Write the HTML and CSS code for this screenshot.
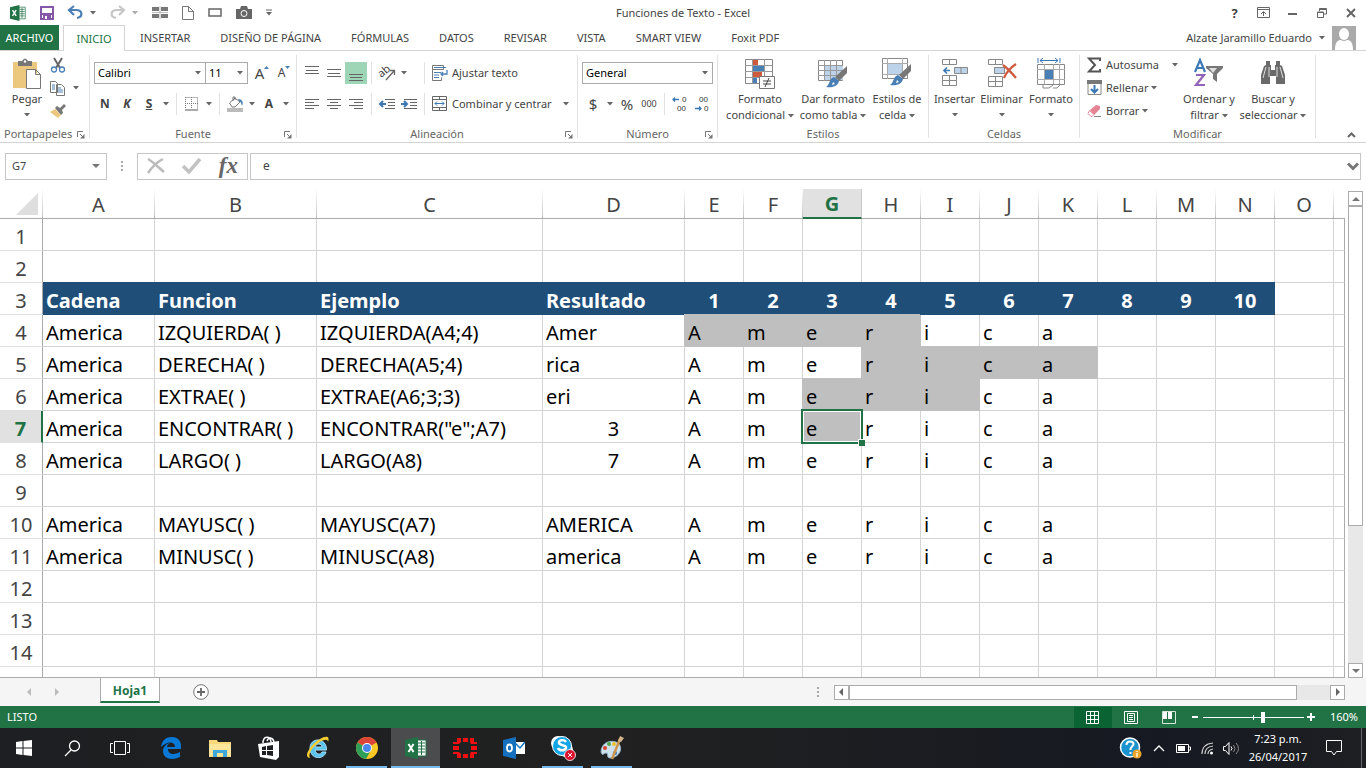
FILE: index.html
```html
<!DOCTYPE html>
<html lang="es">
<head>
<meta charset="utf-8">
<title>Funciones de Texto - Excel</title>
<link rel="stylesheet" href="styles.css">
</head>
<body>
<svg class="defs" aria-hidden="true">
  <symbol id="caret" viewBox="0 0 6 4"><path d="M0 0h6L3 3.5z" fill="#666"/></symbol>
  <symbol id="launch" viewBox="0 0 8 8"><path d="M.5 6V.5H6M3 3l3 3" fill="none" stroke="#777"/><path d="M7.500 3v4.500H3z" fill="#777"/></symbol>
  <symbol id="excel" viewBox="0 0 22 22"><path d="M12 3h9v16h-9z" fill="#fff" stroke="#217346"/><path d="M13 6h7M13 9h7M13 12h7M13 15h7M16.500 4v14" stroke="#217346"/><path d="M0 3l13-3v22L0 19z" fill="#217346"/><path d="M3.500 7l5 8M8.500 7l-5 8" stroke="#fff" stroke-width="2"/></symbol>
  <symbol id="brush" viewBox="0 0 24 22"><path d="M23 0v7l-8 8-4-4z" fill="#777"/><path d="M10 11l5 4c-1 5-6 7-13 6 4-2 3-9 8-10z" fill="#4a7fb5"/><path d="M9 16l2 2-3 1z" fill="#fff"/></symbol>
</svg>

<header class="titlebar">
  <div class="quick">
    <svg class="app" width="16" height="16"><use href="#excel"/></svg>
    <button aria-label="Guardar"><svg width="14" height="14" viewBox="0 0 14 14"><path d="M1 1h12v12H1z" fill="#fff" stroke="#8657a8" stroke-width="2"/><path d="M1 7h12v2H1zM3 9h8v5H3z" fill="#8657a8"/><path d="M5 10h2v3H5z" fill="#fff"/></svg></button>
    <button class="undo" aria-label="Deshacer"><svg width="15" height="13" viewBox="0 0 15 13"><path d="M6 0L1 4l5 5M1 4h7c7 0 7 7 1 8" fill="none" stroke="#4a7fb5" stroke-width="2.200"/></svg><svg class="caret"><use href="#caret"/></svg></button>
    <button class="undo faded" aria-label="Rehacer"><svg width="15" height="13" viewBox="0 0 15 13"><path d="M9 0l5 4-5 5M14 4H7C0 4 0 11 6 12" fill="none" stroke="#999" stroke-width="2.200"/></svg><svg class="caret"><use href="#caret"/></svg></button>
    <button aria-label="Dividir"><svg width="16" height="13" viewBox="0 0 16 13"><path d="M0 1h7v4H0zM9 1h7v4H9zM0 8h7v4H0zM9 8h7v4H9z" fill="#777"/><path d="M0 6.500h16M8 0v13" stroke="#bbb"/></svg></button>
    <button aria-label="Nuevo"><svg width="12" height="14" viewBox="0 0 12 14"><path d="M.5.5h6l5 5v8H.5zM6.500.5v5h5" fill="#fff" stroke="#777"/></svg></button>
    <button aria-label="Rectángulo"><svg width="14" height="9" viewBox="0 0 14 9"><path d="M1 1h12v7H1z" fill="#fff" stroke="#666" stroke-width="1.500"/></svg></button>
    <button aria-label="Cámara"><svg width="16" height="13" viewBox="0 0 16 13"><path d="M0 3h4l1-3h6l1 3h4v10H0z" fill="#666"/><circle cx="8" cy="7.500" r="3" fill="none" stroke="#fff"/></svg></button>
    <button class="more" aria-label="Personalizar"><svg width="6" height="7" viewBox="0 0 6 7"><path d="M0 1h6" stroke="#666"/><path d="M0 3h6L3 6.500z" fill="#666"/></svg></button>
  </div>
  <h1>Funciones de Texto - Excel</h1>
  <div class="window">
    <button aria-label="Ayuda"><b>?</b></button>
    <button aria-label="Cinta"><svg width="13" height="11" viewBox="0 0 13 11"><path d="M.5.500h12v10H.5zM.5 2.500h12M6.500 9V5M4 7l2.500-2.500L9 7" fill="none" stroke="#666"/></svg></button>
    <button aria-label="Minimizar"><svg width="10" height="11" viewBox="0 0 10 11"><path d="M0 7h9" stroke="#666" stroke-width="2"/></svg></button>
    <button aria-label="Restaurar"><svg width="10" height="10" viewBox="0 0 10 10"><path d="M.5 4h6v5.500h-6zM.5 4.500h6M2.500 3V.5h7V6H7M2.500 1.500h7" fill="none" stroke="#666"/></svg></button>
    <button aria-label="Cerrar"><svg width="10" height="10" viewBox="0 0 10 10"><path d="M1 1l8 8M9 1L1 9" stroke="#666" stroke-width="2"/></svg></button>
  </div>
</header>

<nav class="tabs">
  <button class="file">ARCHIVO</button>
  <button class="active">INICIO</button>
  <button>INSERTAR</button>
  <button>DISEÑO DE PÁGINA</button>
  <button>FÓRMULAS</button>
  <button>DATOS</button>
  <button>REVISAR</button>
  <button>VISTA</button>
  <button>SMART VIEW</button>
  <button>Foxit PDF</button>
  <button class="user">Alzate Jaramillo Eduardo <svg class="caret"><use href="#caret"/></svg>
    <svg width="24" height="24" viewBox="0 0 24 24"><path d="M0 0h24v24H0z" fill="#aaa"/><ellipse cx="12" cy="8" rx="5" ry="6" fill="#fff"/><path d="M3 24c0-8 3-10 6-10q3 2 6 0c3 0 6 2 6 10z" fill="#fff"/></svg></button>
</nav>

<section class="ribbon">
  <div class="group clipboard">
    <div class="body">
      <button class="big"><svg width="30" height="32" viewBox="0 0 30 32"><path d="M1 4h24v26H1z" fill="#ecc77e"/><path d="M6 3h4q3-5 6 0h4v5H6z" fill="#777"/><circle cx="13" cy="3.500" r="1.200" fill="#fff"/><path d="M14.500 11.500h9l5 5v14h-14zM23.500 11.500v5h5" fill="#fff" stroke="#777"/></svg><span>Pegar</span><svg class="caret"><use href="#caret"/></svg></button>
      <div class="stack">
        <button aria-label="Cortar"><svg width="16" height="16" viewBox="0 0 16 16"><path d="M4 1l6 10M12 1L6 11" stroke="#666" stroke-width="2"/><circle cx="4" cy="12.500" r="2.500" fill="none" stroke="#4a7fb5" stroke-width="1.300"/><circle cx="12" cy="12.500" r="2.500" fill="none" stroke="#4a7fb5" stroke-width="1.300"/></svg></button>
        <button aria-label="Copiar"><svg width="16" height="15" viewBox="0 0 16 15"><path d="M.5.500h5l2 2v9h-7zM6.500 3.500h5l3 3v8h-8z" fill="#fff" stroke="#777"/><path d="M2 4h3M2 6h3M2 8h3M8 7h3M8 9h5M8 11h5" stroke="#4a7fb5"/></svg><svg class="caret"><use href="#caret"/></svg></button>
        <button aria-label="Copiar formato"><svg width="16" height="15" viewBox="0 0 16 15"><path d="M0 8l5-3 6 6-3 3z" fill="#ecc77e"/><path d="M5 4l2-2 3 2 4-4 2 2-4 4 1 3-2 2z" fill="#777"/></svg></button>
      </div>
    </div>
    <footer>Portapapeles<svg class="launch"><use href="#launch"/></svg></footer>
  </div>

  <div class="group font">
    <div class="body rows">
      <div class="row">
        <label class="pick family"><select aria-label="Fuente"><option>Calibri</option></select><svg class="caret"><use href="#caret"/></svg></label>
        <label class="pick size"><select aria-label="Tamaño"><option>11</option></select><svg class="caret"><use href="#caret"/></svg></label>
        <button class="ib grow" aria-label="Aumentar tamaño">A<svg width="5" height="3" viewBox="0 0 5 3"><path d="M0 3h5L2.500 0z" fill="#4a7fb5"/></svg></button>
        <button class="ib grow small" aria-label="Disminuir tamaño">A<svg width="5" height="3" viewBox="0 0 5 3"><path d="M0 0h5L2.500 3z" fill="#4a7fb5"/></svg></button>
      </div>
      <div class="row">
        <button class="ib"><b>N</b></button><button class="ib"><b><i>K</i></b></button><button class="ib"><b><u>S</u></b></button><button class="dd" aria-label="Subrayado"><svg class="caret"><use href="#caret"/></svg></button>
        <i class="sep"></i>
        <button class="ib" aria-label="Bordes"><svg width="14" height="14" viewBox="0 0 14 14"><path d="M.5.500h12v12M.5 0v12M6.500 0v12M0 6.500h13" fill="none" stroke="#777" stroke-dasharray="1 1"/><path d="M0 13h13" stroke="#555"/></svg></button><button class="dd" aria-label="Más bordes"><svg class="caret"><use href="#caret"/></svg></button>
        <i class="sep"></i>
        <button class="ib" aria-label="Relleno"><svg width="17" height="16" viewBox="0 0 17 16"><path d="M0 12h16v4H0z" fill="#bbb"/><path d="M2.500 7L8 2l5 4-5 5H5zM6 5V1h2v3" fill="#fff" stroke="#777"/><path d="M11 3c4 0 6 3 4 7-1-3-1-4-3-5z" fill="#4a7fb5"/></svg></button><button class="dd" aria-label="Más rellenos"><svg class="caret"><use href="#caret"/></svg></button>
        <button class="ib"><b>A</b></button><button class="dd" aria-label="Color de fuente"><svg class="caret"><use href="#caret"/></svg></button>
      </div>
    </div>
    <footer>Fuente<svg class="launch"><use href="#launch"/></svg></footer>
  </div>

  <div class="group align">
    <div class="body rows">
      <div class="row">
        <button class="ib" aria-label="Arriba"><svg width="14" height="14" viewBox="0 0 14 14"><path d="M0 .5h14M1 4.500h12M0 7.500h14" stroke="#666"/></svg></button>
        <button class="ib" aria-label="Medio"><svg width="14" height="14" viewBox="0 0 14 14"><path d="M0 3.500h14M1 7.500h12M0 10.500h14" stroke="#666"/></svg></button>
        <button class="ib on" aria-label="Abajo"><svg width="14" height="14" viewBox="0 0 14 14"><path d="M0 8.500h14M1 11.500h12M0 14.500h14" stroke="#666"/></svg></button>
        <i class="sep"></i>
        <div class="mid"><button class="ib" aria-label="Orientación"><svg width="18" height="18" viewBox="0 0 18 18"><text x="1" y="12" transform="rotate(-40 5 10)" font-size="11" fill="#444">ab</text><path d="M8 16l8-9M12 6.500h4.500V11" fill="none" stroke="#666" stroke-width="1.300"/></svg></button><button class="dd" aria-label="Más orientaciones"><svg class="caret"><use href="#caret"/></svg></button></div>
        <i class="sep"></i>
        <button class="tb"><svg width="16" height="16" viewBox="0 0 16 16"><path d="M.5.500h11v4H.5zM.5 4.500v11h9v-3" fill="none" stroke="#777"/><path d="M2 2.500h12M2 7.500h7M2 10h5M2 12.500h5" stroke="#4a7fb5"/><path d="M15 5v4H9M11 7L9 9l2 2" fill="none" stroke="#4a7fb5" stroke-width="1.300"/></svg>Ajustar texto</button>
      </div>
      <div class="row">
        <button class="ib" aria-label="Izquierda"><svg width="14" height="12" viewBox="0 0 14 12"><path d="M0 1.500h14M0 4.500h9M0 7.500h14M0 10.500h9" stroke="#666"/></svg></button>
        <button class="ib" aria-label="Centro"><svg width="14" height="12" viewBox="0 0 14 12"><path d="M0 1.500h14M3 4.500h8M0 7.500h14M3 10.500h8" stroke="#666"/></svg></button>
        <button class="ib" aria-label="Derecha"><svg width="14" height="12" viewBox="0 0 14 12"><path d="M0 1.500h14M5 4.500h9M0 7.500h14M5 10.500h9" stroke="#666"/></svg></button>
        <i class="sep"></i>
        <div class="mid"><button class="ib" aria-label="Disminuir sangría"><svg width="16" height="12" viewBox="0 0 16 12"><path d="M6 1.500h10M9 4.500h7M9 7.500h7M6 10.500h10" stroke="#666"/><path d="M1 6h6M4 3L1 6l3 3" fill="none" stroke="#3b78b5" stroke-width="2"/></svg></button><button class="ib" aria-label="Aumentar sangría"><svg width="16" height="12" viewBox="0 0 16 12"><path d="M3 1.500h13M9 4.500h7M9 7.500h7M3 10.500h13" stroke="#666"/><path d="M0 6h6M3 3l3 3-3 3" fill="none" stroke="#3b78b5" stroke-width="2"/></svg></button></div>
        <i class="sep"></i>
        <button class="tb"><svg width="16" height="16" viewBox="0 0 16 16"><path d="M.5.500h14v14H.5zM.5 3.500h14M.5 11.500h14M7.500 1v2M7.500 12v3" fill="none" stroke="#666"/><path d="M3 7.500h9M5 5.500l-2 2 2 2M10 5.500l2 2-2 2" fill="none" stroke="#3b78b5"/></svg>Combinar y centrar</button><button class="dd" aria-label="Más combinaciones"><svg class="caret"><use href="#caret"/></svg></button>
      </div>
    </div>
    <footer>Alineación<svg class="launch"><use href="#launch"/></svg></footer>
  </div>

  <div class="group number">
    <div class="body rows">
      <div class="row"><label class="pick format"><select aria-label="Formato de número"><option>General</option></select><svg class="caret"><use href="#caret"/></svg></label></div>
      <div class="row">
        <button class="ib sym">$</button><button class="dd" aria-label="Más monedas"><svg class="caret"><use href="#caret"/></svg></button><button class="ib sym">%</button><button class="ib tiny">000</button>
        <i class="sep"></i>
        <button class="ib dec" aria-label="Aumentar decimales"><svg width="16" height="18" viewBox="0 0 16 18"><path d="M1 4.500h6M3 2.500l-2 2 2 2" fill="none" stroke="#3b78b5" stroke-width="1.300"/><text x="10" y="7">0</text><text x="5" y="16">00</text></svg></button>
        <button class="ib dec" aria-label="Disminuir decimales"><svg width="16" height="18" viewBox="0 0 16 18"><path d="M1 13.500h6M5 11.500l2 2-2 2" fill="none" stroke="#3b78b5" stroke-width="1.300"/><text x="5" y="7">00</text><text x="10" y="16">0</text></svg></button>
      </div>
    </div>
    <footer>Número<svg class="launch"><use href="#launch"/></svg></footer>
  </div>

  <div class="group styles">
    <div class="body">
      <button class="big b72"><svg width="30" height="32" viewBox="0 0 30 32"><path d="M.5 1.500h27v24H.5z" fill="#fff" stroke="#888"/><path d="M8 2h5v5H8zM8 14h9v5H8z" fill="#cf5b3f"/><path d="M8 8h11v5H8zM8 20h4v5H8z" fill="#4a7fb5"/><path d="M.5 7.500h27M.5 13.500h27M.5 19.500h27M7.500 1v25M19.500 1v25" stroke="#999"/><path d="M14.500 18.500h15v12h-15z" fill="#fff" stroke="#777"/><path d="M18 23h8M18 26h8M24 20l-4 9" stroke="#444"/></svg><span>Formato<br>condicional <svg class="caret"><use href="#caret"/></svg></span></button>
      <button class="big b74"><svg width="30" height="32" viewBox="0 0 30 32"><path d="M.5 2.500h24v20H.5z" fill="#fff" stroke="#888"/><path d="M7 8h18v14H7z" fill="#bdd3ea"/><path d="M0 7.500h25M0 12.500h25M0 17.500h25M6.500 2v21M12.500 2v21M18.500 2v21" stroke="#999"/><use href="#brush" x="6" y="8" width="24" height="22"/></svg><span>Dar formato<br>como tabla <svg class="caret"><use href="#caret"/></svg></span></button>
      <button class="big b54"><svg width="30" height="32" viewBox="0 0 30 32"><path d="M.5.500h25v20H.5z" fill="#fff" stroke="#888"/><path d="M0 5.500h26M0 16.500h26M5.500 0v21M20.500 0v21" stroke="#aaa"/><path d="M6 6h14v10H6z" fill="#bdd3ea"/><use href="#brush" x="6" y="6" width="24" height="22"/></svg><span>Estilos de<br>celda <svg class="caret"><use href="#caret"/></svg></span></button>
    </div>
    <footer>Estilos</footer>
  </div>

  <div class="group cells">
    <div class="body">
      <button class="big b46"><svg width="28" height="32" viewBox="0 0 28 32"><path d="M1.500 1.500h14v5h-14zM8.500 1v5M1.500 17.500h14v10h-14zM1.500 22.500h14M8.500 17v10" fill="#fff" stroke="#888"/><path d="M13.500 9.500h13v6h-13zM20 9v6" fill="#bdd3ea" stroke="#888"/><path d="M3 12.500h6M6 9.500l-3 3 3 3" fill="none" stroke="#3b78b5" stroke-width="1.600"/></svg><span>Insertar</span><svg class="caret"><use href="#caret"/></svg></button>
      <button class="big b46"><svg width="30" height="32" viewBox="0 0 30 32"><path d="M1.500 1.500h14v5h-14zM8.500 1v5M1.500 18.500h14v10h-14zM1.500 23.500h14M8.500 18v10" fill="#fff" stroke="#888"/><path d="M7.500 9.500h10v6h-10z" fill="#bdd3ea" stroke="#888"/><path d="M16 7c4 3 8 7 13 13M29 6c-6 4-10 9-12 14" fill="none" stroke="#cf5b3f" stroke-width="2.200"/></svg><span>Eliminar</span><svg class="caret"><use href="#caret"/></svg></button>
      <button class="big b52"><svg width="28" height="32" viewBox="0 0 28 32"><path d="M1 0v5M23 0v5M3 2.500h18M6 0L3 2.500 6 5M18 0l3 2.500L18 5" fill="none" stroke="#3b78b5"/><path d="M.5 6.500h27v20H.5zM6 26v4h6l4-3M16 30h4l3-3" fill="#fff" stroke="#888"/><path d="M0 11.500h28M0 21.500h28M7.500 6v20M16.500 6v20M22.500 6v20" stroke="#aaa"/><path d="M8 12h8v9H8z" fill="#4a7fb5"/></svg><span>Formato</span><svg class="caret"><use href="#caret"/></svg></button>
    </div>
    <footer>Celdas</footer>
  </div>

  <div class="group edit">
    <div class="body">
      <div class="list">
        <button><svg width="15" height="16" viewBox="0 0 15 16"><path d="M13 4V1.500H2L8 8l-6 6.500h11V12" fill="none" stroke="#555" stroke-width="2"/></svg>Autosuma<svg class="caret push"><use href="#caret"/></svg></button>
        <button><svg width="15" height="16" viewBox="0 0 15 16"><path d="M1 1.500h13v13H1z" fill="#fff" stroke="#888"/><path d="M0 0h15v4H0z" fill="#777"/><path d="M7.500 5v7M4 9l3.500 3.500L11 9" fill="none" stroke="#3b78b5" stroke-width="2"/></svg>Rellenar<svg class="caret"><use href="#caret"/></svg></button>
        <button><svg width="15" height="16" viewBox="0 0 15 16"><path d="M3 7l6-5 4 1v3l-6 6z" fill="#e48394"/><path d="M2.500 7.500l4.500 4-2 2H4l-3-3z" fill="#fff" stroke="#e48394"/><path d="M7 13.500h7" stroke="#888"/></svg>Borrar<svg class="caret"><use href="#caret"/></svg></button>
      </div>
      <button class="big b62"><svg width="30" height="32" viewBox="0 0 30 32"><path d="M1 14L6 2l5 12M3 10h6" fill="none" stroke="#3b78b5" stroke-width="2.200"/><path d="M2 17h8L2 27h9" fill="none" stroke="#9363b5" stroke-width="2.200"/><path d="M12 8h17v2l-6 6v8l-4-3v-5l-7-6z" fill="#777"/><path d="M15 10h8l-4 5z" fill="#ddd"/></svg><span>Ordenar y<br>filtrar <svg class="caret"><use href="#caret"/></svg></span></button>
      <button class="big b66"><svg width="28" height="32" viewBox="0 0 28 32"><path d="M7 3h4v4h1v5h4V7h1V3h4v4l2 1 3 9v9h-9v-8h-6v8H2v-9L5 8l2-1z" fill="#6a6a6a"/><path d="M7 9L4 20M10 9v10M18 9v10M21 9l3 11" stroke="#ddd"/></svg><span>Buscar y<br>seleccionar <svg class="caret"><use href="#caret"/></svg></span></button>
    </div>
    <footer>Modificar</footer>
  </div>
  <button class="collapse" aria-label="Contraer la cinta"><svg width="9" height="6" viewBox="0 0 9 6"><path d="M1 5l3.500-3.500L8 5" fill="none" stroke="#666" stroke-width="2"/></svg></button>
</section>

<section class="formula">
  <label class="name"><input type="text" value="G7" aria-label="Cuadro de nombres"><svg width="8" height="4"><path d="M0 0h8L4 4z" fill="#777"/></svg></label>
  <svg class="dots" width="2" height="11"><path d="M0 0h2v2H0zM0 4h2v2H0zM0 8h2v2H0z" fill="#aaa"/></svg>
  <div class="entry">
    <button aria-label="Cancelar"><svg width="18" height="16" viewBox="0 0 18 16"><path d="M1 1c5 3 10 8 16 13M16 1C10 4 5 9 1 15" fill="none" stroke="#bbb" stroke-width="2.500"/></svg></button>
    <button aria-label="Introducir"><svg width="19" height="16" viewBox="0 0 19 16"><path d="M1 8l6 6L18 1" fill="none" stroke="#c2c2c2" stroke-width="3.500"/></svg></button>
    <button class="fx">fx</button>
  </div>
  <label class="content"><input type="text" value="e" aria-label="Barra de fórmulas"><svg width="12" height="9" viewBox="0 0 12 9"><path d="M1 1.500l5 5 5-5" fill="none" stroke="#777" stroke-width="3"/></svg></label>
</section>

<main class="sheet">
  <div class="view">
    <table>
      <colgroup><col class="c-row"><col class="c-a"><col class="c-b"><col class="c-c"><col class="c-d"><col class="c-n" span="11"><col></colgroup>
      <thead>
        <tr><th class="corner"><svg width="22" height="22"><path d="M22 0v22H0z" fill="#dedede"/></svg></th><th>A</th><th>B</th><th>C</th><th>D</th><th>E</th><th>F</th><th class="cur">G</th><th>H</th><th>I</th><th>J</th><th>K</th><th>L</th><th>M</th><th>N</th><th>O</th><th class="end"></th></tr>
      </thead>
      <tbody>
        <tr><th>1<td><td><td><td><td><td><td><td><td><td><td><td><td><td><td><td class="end"></tr>
        <tr><th>2<td><td><td><td><td><td><td><td><td><td><td><td><td><td><td><td class="end"></tr>
        <tr class="head"><th>3<td>Cadena<td>Funcion<td>Ejemplo<td>Resultado<td>1<td>2<td>3<td>4<td>5<td>6<td>7<td>8<td>9<td>10<td class="out"><td class="end out"></tr>
        <tr><th>4<td>America<td>IZQUIERDA( )<td>IZQUIERDA(A4;4)<td>Amer<td class="g">A<td class="g">m<td class="g">e<td class="g">r<td>i<td>c<td>a<td><td><td><td><td class="end"></tr>
        <tr><th>5<td>America<td>DERECHA( )<td>DERECHA(A5;4)<td>rica<td>A<td>m<td>e<td class="g">r<td class="g">i<td class="g">c<td class="g">a<td><td><td><td><td class="end"></tr>
        <tr><th>6<td>America<td>EXTRAE( )<td>EXTRAE(A6;3;3)<td>eri<td>A<td>m<td class="g">e<td class="g">r<td class="g">i<td>c<td>a<td><td><td><td><td class="end"></tr>
        <tr><th class="cur">7<td>America<td>ENCONTRAR( )<td>ENCONTRAR("e";A7)<td class="mid-text">3<td>A<td>m<td class="g selected">e<td>r<td>i<td>c<td>a<td><td><td><td><td class="end"></tr>
        <tr><th>8<td>America<td>LARGO( )<td>LARGO(A8)<td class="mid-text">7<td>A<td>m<td>e<td>r<td>i<td>c<td>a<td><td><td><td><td class="end"></tr>
        <tr><th>9<td><td><td><td><td><td><td><td><td><td><td><td><td><td><td><td class="end"></tr>
        <tr><th>10<td>America<td>MAYUSC( )<td>MAYUSC(A7)<td>AMERICA<td>A<td>m<td>e<td>r<td>i<td>c<td>a<td><td><td><td><td class="end"></tr>
        <tr><th>11<td>America<td>MINUSC( )<td>MINUSC(A8)<td>america<td>A<td>m<td>e<td>r<td>i<td>c<td>a<td><td><td><td><td class="end"></tr>
        <tr><th>12<td><td><td><td><td><td><td><td><td><td><td><td><td><td><td><td class="end"></tr>
        <tr><th>13<td><td><td><td><td><td><td><td><td><td><td><td><td><td><td><td class="end"></tr>
        <tr><th>14<td><td><td><td><td><td><td><td><td><td><td><td><td><td><td><td class="end"></tr>
        <tr><th>15<td><td><td><td><td><td><td><td><td><td><td><td><td><td><td><td class="end"></tr>
      </tbody>
    </table>
  </div>
  <div class="vscroll">
    <button aria-label="Subir"><svg width="8" height="4"><path d="M0 4h8L4 0z" fill="#777"/></svg></button>
    <div class="thumb"></div><div class="track"></div>
    <button aria-label="Bajar"><svg width="8" height="4"><path d="M0 0h8L4 4z" fill="#777"/></svg></button>
  </div>
</main>

<div class="sheetbar">
  <button class="arrow" aria-label="Hoja anterior"><svg width="4" height="8"><path d="M4 0v8L0 4z" fill="#bbb"/></svg></button>
  <button class="arrow" aria-label="Hoja siguiente"><svg width="4" height="8"><path d="M0 0v8l4-4z" fill="#bbb"/></svg></button>
  <button class="hoja">Hoja1</button>
  <button class="add" aria-label="Hoja nueva"><svg width="16" height="16" viewBox="0 0 16 16"><circle cx="8" cy="8" r="7.300" fill="#fff" stroke="#777"/><path d="M4 8h8M8 4v8" stroke="#666" stroke-width="1.800"/></svg></button>
  <svg class="dots" width="2" height="11"><path d="M0 0h2v2H0zM0 4h2v2H0zM0 8h2v2H0z" fill="#aaa"/></svg>
  <div class="hscroll">
    <button aria-label="Izquierda"><svg width="4" height="8"><path d="M4 0v8L0 4z" fill="#666"/></svg></button>
    <div class="thumb"></div><div class="track"></div>
    <button aria-label="Derecha"><svg width="4" height="8"><path d="M0 0v8l4-4z" fill="#666"/></svg></button>
  </div>
</div>

<div class="status">
  <span class="ready">LISTO</span>
  <button class="on" aria-label="Normal"><svg width="13" height="13" viewBox="0 0 13 13"><path d="M.5.500h12v12H.5zM.5 4.500h12M.5 8.500h12M4.500 0v13M8.500 0v13" fill="none" stroke="#fff"/></svg></button>
  <button aria-label="Diseño de página"><svg width="14" height="13" viewBox="0 0 14 13"><path d="M.5.500h13v12H.5zM3.500 2.500h7v8h-7zM5 4.500h4M5 6.500h4M5 8.500h4" fill="none" stroke="#fff"/></svg></button>
  <button aria-label="Saltos de página"><svg width="14" height="13" viewBox="0 0 14 13"><path d="M.5.500h13v12H.5z" fill="none" stroke="#d5e8dc"/><path d="M1 1h4v7H1zM6 1h4v7H6z" fill="#fff"/></svg></button>
  <button class="step" aria-label="Alejar"><svg width="6" height="10"><path d="M0 5h6" stroke="#fff" stroke-width="2"/></svg></button>
  <input type="range" min="10" max="260" value="160" aria-label="Zoom">
  <button class="step" aria-label="Acercar"><svg width="8" height="10"><path d="M0 5h8M4 1v8" stroke="#fff" stroke-width="2"/></svg></button>
  <span class="pct">160%</span>
</div>

<footer class="taskbar">
  <button class="sys" aria-label="Inicio"><svg width="16" height="16" viewBox="0 0 16 16"><path d="M0 2l6.500-1v6.500H0zM7.500 1L16 0v7.500H7.500zM0 8.500h6.500V15L0 14zM7.500 8.500H16V16l-8.500-1z" fill="#fff"/></svg></button>
  <button class="sys" aria-label="Buscar"><svg width="17" height="17" viewBox="0 0 17 17"><circle cx="10.500" cy="6" r="5" fill="none" stroke="#fff" stroke-width="1.300"/><path d="M7 10l-6 6" stroke="#fff" stroke-width="1.300"/></svg></button>
  <button class="sys" aria-label="Vista de tareas"><svg width="20" height="14" viewBox="0 0 20 14"><path d="M4.500.500h11v13h-11zM3 2.500H.5v9H3M17 2.500h2.500v9H17" fill="none" stroke="#fff"/></svg></button>
  <div class="apps">
    <button aria-label="Edge"><svg width="20" height="22" viewBox="0 0 20 22"><path d="M0 10C1 3 5 0 11 0c6 0 9 4 9 9v3H7c0 6 7 6 12 3v5C11 24 2 22 2 14c0-4 3-7 7-8-2 1-3 3-3 4h8c0-6-8-6-14 0z" fill="#0a78d7"/></svg></button>
    <button aria-label="Explorador"><svg width="22" height="19" viewBox="0 0 22 19"><path d="M0 1h8l1 2h13v15H0z" fill="#f8d878"/><path d="M0 5h22v12H0z" fill="#fbe59a"/><path d="M4 18v-7h14v7h-4v-4H8v4z" fill="#3fa9dc"/></svg></button>
    <button aria-label="Tienda"><svg width="22" height="24" viewBox="0 0 22 24"><path d="M5 7c0-7 7-8 8-1M9 5c2-5 7-3 7 2" fill="none" stroke="#fff" stroke-width="1.500"/><path d="M0 8l21-3v16l-3 3L2 21z" fill="#fff"/><path d="M4 11l4-1v4H4zM9 10l6-1v5H9zM4 15h4v4H4zM9 15h6v5l-6-1z" fill="#1d1f22"/></svg></button>
    <button aria-label="Internet Explorer"><svg width="24" height="24" viewBox="0 0 24 24"><path d="M20.500 14H9c1 5 6 5 7 2h4c-2 8-16 8-16-4C4 1 21 1 20.500 14zM9 11h7c0-4-6-4-7 0z" fill="#5cc2ee" stroke="#a7e2fa"/><path d="M4 22c-8-1 2-15 10-19 7-4 10-2 8 3 0-8-22 7-18 16z" fill="#f5cc31"/></svg></button>
    <button class="run" aria-label="Chrome"><svg width="22" height="22" viewBox="0 0 22 22"><circle cx="11" cy="11" r="11" fill="#fbc926"/><path d="M11 11L1.500 5.500A11 11 0 0 1 20.500 5.500z" fill="#dc4437"/><path d="M11 11L1.500 5.500A11 11 0 0 0 10 22l5-9z" fill="#2f9e58"/><circle cx="11" cy="11" r="5" fill="#fff"/><circle cx="11" cy="11" r="4" fill="#4a88ee"/></svg></button>
    <button class="run cur" aria-label="Excel"><svg width="22" height="22"><use href="#excel"/></svg></button>
    <button aria-label="Aplicación roja"><svg width="24" height="20" viewBox="0 0 24 20"><path d="M10 0h5v4h-5zM10 16h5v4h-5zM0 8h6v4H0zM18 8h6v4h-6zM4 0h4v4L6 6H0V4h4zM17 0h4v4h3v2h-6l-1-2zM0 14h6l2 2v4H4v-4H0zM18 14h6v2h-3v4h-4v-4z" fill="#ee1010"/></svg></button>
    <button aria-label="Outlook"><svg width="22" height="22" viewBox="0 0 22 22"><path d="M12 5h10v12H12z" fill="#fff"/><path d="M12 6l5 5 5-6" fill="none" stroke="#1571bd" stroke-width="1.500"/><path d="M0 3l13-3v22L0 19z" fill="#1571bd"/><ellipse cx="6.500" cy="11" rx="2.500" ry="3.500" fill="none" stroke="#fff" stroke-width="1.800"/></svg></button>
    <button class="run" aria-label="Skype"><svg width="26" height="26" viewBox="0 0 26 26"><circle cx="8" cy="8" r="7" fill="#fff"/><circle cx="16" cy="15" r="7" fill="#fff"/><circle cx="12" cy="11" r="9.500" fill="#12a5e6" stroke="#fff"/><path d="M16 7c-2-3-8-2-7 1s8 2 7 5-7 3-8 0" fill="none" stroke="#fff" stroke-width="2.400"/><circle cx="20" cy="20" r="5.500" fill="#d8152c" stroke="#fff" stroke-width=".8"/><path d="M18 18l4 4M22 18l-4 4" stroke="#fff"/></svg></button>
    <button class="run" aria-label="Paint"><svg width="24" height="24" viewBox="0 0 24 24"><path d="M1 16C1 6 12 3 18 7c6 5 1 15-8 15-4 0-1-5-4-5s-3 4-5-1z" fill="#cfe1ee" stroke="#8fb0c6"/><circle cx="5" cy="12" r="2" fill="#d8432e"/><circle cx="9" cy="8" r="2" fill="#4fa64a"/><circle cx="14" cy="8" r="2" fill="#edc32f"/><circle cx="15" cy="17" r="2" fill="#3278c4"/><path d="M20 3l-8 20" stroke="#ce954d" stroke-width="2.500"/><path d="M18 5l2-5 4 2-3 4z" fill="#d6b78b"/></svg></button>
  </div>
  <div class="tray">
    <button aria-label="Ayuda"><svg width="23" height="22" viewBox="0 0 23 22"><circle cx="11" cy="10.500" r="9.500" fill="#1a93cf" stroke="#fff" stroke-width="1.500"/><path d="M7.500 8c0-5 7-4 7-1 0 2-3 3-3 5v1M11.500 15v2" fill="none" stroke="#fff" stroke-width="2"/><circle cx="18" cy="17" r="4.500" fill="#eda52b"/><path d="M18 14v1M18 16v4" stroke="#fff" stroke-width="1.300"/></svg></button>
    <button aria-label="Iconos ocultos"><svg width="12" height="8"><path d="M1 7l5-5 5 5" fill="none" stroke="#fff" stroke-width="1.300"/></svg></button>
    <button aria-label="Batería"><svg width="15" height="9" viewBox="0 0 15 9"><path d="M.5.500h12v8H.5zM13 3h1.500v3H13" fill="none" stroke="#fff"/><path d="M2 2h7v5H2z" fill="#fff"/></svg></button>
    <button aria-label="Wi-Fi"><svg width="13" height="13" viewBox="0 0 13 13"><path d="M1 12Q1 2 12 1M4 12Q4 5 12 4M7 12Q7 8 12 7" fill="none" stroke="#ccc" stroke-width="1.200"/><circle cx="10.500" cy="11" r="1.500" fill="#fff"/></svg></button>
    <button aria-label="Volumen"><svg width="17" height="13" viewBox="0 0 17 13"><path d="M.5 4.500h2l3.500-4v12l-3.500-4h-2zM8 4.500q2 2 0 4" fill="none" stroke="#fff"/><path d="M10.500 3q3 3.500 0 7M13 1q5 5.500 0 11" fill="none" stroke="#888"/></svg></button>
    <button class="clock">7:23 p.m.<br>26/04/2017</button>
    <button class="note" aria-label="Notificaciones"><svg width="17" height="16" viewBox="0 0 17 16"><path d="M.5.500h15v11h-5L8 15l-2.500-3.500h-5z" fill="none" stroke="#fff"/></svg></button>
    <i class="peek"></i>
  </div>
</footer>
</body>
</html>
```

FILE: styles.css
```css
* { box-sizing: border-box; }
html, body { height: 100%; }
body {
  margin: 0;
  display: flex;
  flex-direction: column;
  overflow: hidden;
  background: #fff;
  color: #444;
  font: 11px/16px "Noto Sans", "Open Sans", sans-serif;
}
button, input, select { font: inherit; color: inherit; }
button { padding: 0; border: 0; background: none; display: flex; align-items: center; justify-content: center; white-space: nowrap; }
svg { flex: none; overflow: visible; }
.defs { position: absolute; width: 0; height: 0; }
.caret { width: 6px; height: 4px; vertical-align: middle; }

/* Title bar */
.titlebar { display: grid; grid-template-columns: 1fr auto 1fr; align-items: center; height: 25px; flex: none; }
.titlebar h1 { margin: 0; font-size: 11px; font-weight: 400; }
.quick { display: flex; align-items: center; gap: 14px; padding-left: 10px; }
.quick button { height: 20px; }
.quick .undo { gap: 7px; }
.quick .faded { opacity: .55; }
.window { display: flex; justify-content: flex-end; gap: 8px; padding-right: 5px; }
.window button { width: 21px; height: 20px; }
.window b { font-size: 13px; }

/* Ribbon tabs */
.tabs { display: flex; height: 26px; flex: none; border-bottom: 1px solid #d4d4d4; }
.tabs button { padding: 0 15px; height: 25px; }
.tabs .file { background: #217346; color: #fff; padding: 0; width: 59px; margin-right: 4px; }
.tabs .active { width: 62px; padding: 0; height: 26px; background: #fff; color: #217346; border: 1px solid #d4d4d4; border-bottom: 0; }
.tabs .user { margin-left: auto; padding: 0 10px 0 0; gap: 7px; }

/* Ribbon */
.ribbon { display: flex; height: 92px; flex: none; padding: 4px 0; border-bottom: 1px solid #d4d4d4; }
.group { display: flex; flex-direction: column; border-right: 1px solid #e1e1e1; padding: 0 4px; flex: none; }
.group .body { flex: 1; display: flex; }
.group footer { display: flex; justify-content: center; height: 15px; line-height: 22px; color: #666; position: relative; }
.launch { position: absolute; right: 0; top: 8px; width: 8px; height: 8px; }
.clipboard { width: 90px; }
.clipboard footer { justify-content: flex-start; }
.font { width: 207px; }
.align { width: 281px; }
.number { width: 140px; }
.styles { width: 211px; padding: 0 6px; }
.cells { width: 151px; padding: 0 2px; }
.edit { width: 236px; }
.big { flex: none; flex-direction: column; justify-content: flex-start; padding-top: 3px; text-align: center; width: 46px; }
.big span { display: block; margin-top: 1px; }
.big > .caret { margin-top: 6px; }
.b72 { width: 72px; } .b74 { width: 74px; } .b54 { width: 54px; }
.b46 { width: 47px; } .b52 { width: 52px; } .b62 { width: 62px; } .b66 { width: 66px; }
.stack { display: flex; flex-direction: column; gap: 3px; }
.stack button { height: 20px; gap: 7px; justify-content: flex-start; }
.rows { flex-direction: column; gap: 9px; padding-top: 7px; }
.row { display: flex; height: 22px; align-items: center; }
.pick { display: flex; align-items: center; flex: none; height: 22px; border: 1px solid #ababab; padding-right: 4px; color: #000; }
.pick select { appearance: none; border: 0; background: none; padding: 0 0 0 3px; flex: 1; min-width: 0; }
.family { width: 112px; } .size { width: 43px; margin-left: -1px; margin-right: 3px; } .format { width: 131px; }
.ib { width: 22px; height: 22px; flex: none; font-size: 12px; }
.ib.on { background: #9fd5b7; }
.ib.grow { align-items: center; font-size: 15px; }
.ib.grow svg { align-self: flex-start; margin-top: 4px; }
.ib.small { font-size: 12px; }
.ib.sym { font-size: 15px; }
.ib.tiny { font-size: 9px; }
.dec text { font: 8px "Liberation Sans", sans-serif; fill: #333; }
.dd { width: 12px; height: 22px; flex: none; }
.sep { width: 1px; height: 22px; margin: 0 4px; background: #e1e1e1; flex: none; }
.mid { display: flex; width: 44px; flex: none; }
.tb { gap: 4px; padding-left: 3px; height: 22px; }
.tb + .dd { margin-left: 8px; }
.list { width: 94px; display: flex; flex-direction: column; gap: 4px; }
.list button { height: 19px; gap: 4px; justify-content: flex-start; padding-left: 3px; }
.list .caret { margin-left: -1px; }
.list .push { margin-left: auto; }
.collapse { margin: auto 10px 0 auto; }

/* Formula bar */
.formula { display: flex; align-items: center; height: 46px; flex: none; padding: 0 5px; }
.formula input { border: 0; outline: 0; background: none; min-width: 0; flex: 1; padding: 0; }
.name, .entry, .content { display: flex; align-items: center; height: 27px; border: 1px solid #c6c6c6; }
.name { width: 102px; padding: 0 6px; }
.formula .dots { margin: 0 14px; }
.entry { width: 111px; justify-content: space-between; padding: 0 9px; margin-right: 2px; }
.entry .fx { font: italic bold 23px/22px "Liberation Serif", serif; color: #666; }
.content { flex: 1; padding: 0 1px 0 12px; font-size: 12px; }

/* Sheet */
.sheet { display: flex; flex: 1; min-height: 0; }
.view { flex: 1; min-width: 0; overflow: hidden; border-bottom: 1px solid #ababab; }
table { width: 100%; table-layout: fixed; border-collapse: separate; border-spacing: 0; font-size: 20px; line-height: 27px; color: #000; }
.c-row { width: 43px; } .c-a { width: 112px; } .c-b { width: 162px; } .c-c { width: 226px; } .c-d { width: 142px; } .c-n { width: 59px; }
th, td { padding: 0; white-space: nowrap; overflow: hidden; }
th { font-weight: 400; color: #444; text-align: center; }
thead th { height: 30px; padding-top: 2px; border-bottom: 1px solid #ababab; border-right: 1px solid; border-image: linear-gradient(#fff, #c8c8c8 90%, #ababab 97%) 1; }
thead th.corner { text-align: right; padding: 0 4px 3px 0; line-height: 0; vertical-align: bottom; }
thead th.end { border-right: 0; }
thead th.cur { border-image: none; border-right-color: #c8c8c8; border-bottom: 2px solid #217346; padding-top: 1px; }
th.cur { background: #e1e1e1; color: #217346; font-weight: 700; }
tbody th { height: 32px; padding-top: 3px; border-right: 1px solid #ababab; border-bottom: 1px solid #e1e1e1; }
tbody th.cur { border-right: 2px solid #217346; }
td { height: 32px; padding: 3px 0 0 3px; border-right: 1px solid #d4d4d4; border-bottom: 1px solid #d4d4d4; }
td.end { border-right-color: #ababab; }
td.mid-text { text-align: center; padding-left: 0; }
.g { background: #bfbfbf; border-color: #bfbfbf; box-shadow: -1px -1px #bfbfbf; }
.head td:not(.out) { background: #1f4e78; border-color: #1f4e78; box-shadow: 0 -1px #1f4e78; color: #fff; font-weight: 700; }
.head td:nth-child(n+6) { text-align: center; padding-left: 0; }
.selected { position: relative; overflow: visible; border-color: #217346; }
.selected::before { content: ""; position: absolute; inset: -2px; border: 2px solid #217346; box-shadow: inset 0 0 0 1px #fff; }
.selected::after { content: ""; position: absolute; right: -4px; bottom: -4px; width: 6px; height: 6px; background: #217346; border: solid #fff; border-width: 1px 0 0 1px; }
.vscroll { width: 21px; padding: 2px 3px 0; display: flex; flex-direction: column; }
.vscroll button, .hscroll button { flex: none; width: 15px; height: 15px; border: 1px solid #ababab; background: #fff; }
.thumb { border: 1px solid #ababab; background: #fff; }
.track { background: #e8e8e8; }
.vscroll .thumb { flex: 320; }
.vscroll .track { flex: 138; }

/* Sheet tabs */
.sheetbar { display: flex; align-items: center; height: 28px; flex: none; background: #f5f5f5; padding-right: 21px; }
.arrow { width: 28px; }
.arrow:first-child { margin-left: 15px; }
.hoja { align-self: flex-start; width: 60px; height: 25px; margin: 0 33px 0 29px; padding-top: 2px; background: #fff; color: #217346; font-weight: 700; font-size: 12px; border: solid #ababab; border-width: 0 1px; border-bottom: 2px solid #217346; }
.sheetbar .dots { margin: 0 15px 0 auto; }
.hscroll { display: flex; width: 38%; height: 15px; }
.hscroll .thumb { flex: 446; }
.hscroll .track { flex: 33; }

/* Status bar */
.status { display: flex; align-items: center; height: 22px; flex: none; background: #217346; color: #fff; padding: 0 8px 0 7px; }
.ready { margin-right: auto; }
.status button { width: 38px; height: 21px; }
.status .on { background: #0a6332; }
.status .step { width: 13px; }
.status button:nth-of-type(3) { margin-right: 1px; }
.status input { appearance: none; width: 101px; height: 11px; margin: 0 1px; background: linear-gradient(#fff, #fff) 50% 50% / 1px 5px no-repeat, linear-gradient(#fff, #fff) 50% 50% / 100% 1px no-repeat; }
.status input::-webkit-slider-thumb { appearance: none; width: 4px; height: 11px; background: #fff; }
.pct { margin-left: 12px; }

/* Taskbar */
.taskbar { display: flex; height: 40px; flex: none; background: linear-gradient(90deg, #1d1f22 0%, #212121 45%, #161922 85%, #1d1f22); color: #fff; }
.sys { width: 48px; }
.apps { display: flex; margin-left: 2px; }
.apps button { width: 49px; position: relative; }
.apps .cur { background: #4b4c4e; }
.run::after { content: ""; position: absolute; left: 4px; right: 4px; bottom: 0; height: 2px; background: #76b9ed; }
.cur.run::after { left: 0; right: 0; }
.tray { display: flex; margin-left: auto; }
.tray button { width: 24px; }
.tray button:first-child { width: 34px; }
.tray .clock { width: 70px; text-align: center; line-height: 18px; }
.tray .note { width: 42px; }
.peek { width: 5px; border-left: 1px solid #666; margin-left: 6px; }
```
